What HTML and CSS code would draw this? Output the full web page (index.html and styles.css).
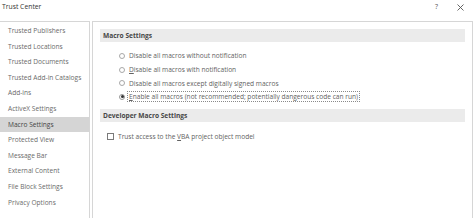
FILE: index.html
```html
<!DOCTYPE html>
<html>
<head>
<meta charset="utf-8">
<link rel="stylesheet" href="styles.css">
</head>
<body>
<div class="window">
  <div class="titlebar">
    <span class="title">Trust Center</span>
    <span class="help">?</span>
    <span class="close">
      <svg width="7" height="7" viewBox="0 0 7 7"><path d="M0.5 0.5 L6.5 6.5 M6.5 0.5 L0.5 6.5" stroke="#555" stroke-width="0.9" fill="none"/></svg>
    </span>
  </div>
  <div class="main">
    <nav class="nav">
      <div class="nav-item">Trusted Publishers</div>
      <div class="nav-item">Trusted Locations</div>
      <div class="nav-item">Trusted Documents</div>
      <div class="nav-item">Trusted Add-in Catalogs</div>
      <div class="nav-item">Add-ins</div>
      <div class="nav-item">ActiveX Settings</div>
      <div class="nav-item selected">Macro Settings</div>
      <div class="nav-item">Protected View</div>
      <div class="nav-item">Message Bar</div>
      <div class="nav-item">External Content</div>
      <div class="nav-item">File Block Settings</div>
      <div class="nav-item">Privacy Options</div>
    </nav>
    <section class="panel">
      <div class="section-head">Macro Settings</div>
      <div class="options">
        <div class="option"><span class="radio"></span><span class="label">Disable all macros without notification</span></div>
        <div class="option"><span class="radio"></span><span class="label"><u>D</u>isable all macros with notification</span></div>
        <div class="option"><span class="radio"></span><span class="label">Disable all macros except di<u>g</u>itally signed macros</span></div>
        <div class="option"><span class="radio checked"></span><span class="label focus"><u>E</u>nable all macros (not recommended; potentially dangerous code can run)</span></div>
      </div>
      <div class="section-head dev">Developer Macro Settings</div>
      <div class="check-row"><span class="checkbox"></span><span class="label">Trust access to the <u>V</u>BA project object model</span></div>
    </section>
  </div>
</div>
</body>
</html>
```
FILE: styles.css
```css
html, body {
  margin: 0;
  padding: 0;
  background: #ffffff;
}
body {
  width: 474px;
  height: 218px;
  overflow: hidden;
  font-family: "Open Sans", "Noto Sans", sans-serif;
  font-size: 6.6px;
  color: #626262;
}
.window {
  display: flex;
  flex-direction: column;
  height: 218px;
}
.titlebar {
  height: 21px;
  display: flex;
  align-items: flex-start;
  padding: 2px 0 0 2px;
  box-sizing: border-box;
}
.title {
  font-size: 6.8px;
  line-height: 10px;
  color: #333;
  flex: 1;
}
.help {
  font-size: 7px;
  line-height: 10px;
  color: #555;
  margin-right: 19px;
}
.close {
  display: flex;
  align-items: center;
  height: 10px;
  margin-right: 10px;
}
.main {
  flex: 1;
  display: flex;
  gap: 2px;
}
.nav {
  width: 90px;
  box-sizing: border-box;
  border-top: 1px solid #d6d6d6;
  border-right: 1px solid #d6d6d6;
  padding-top: 1px;
}
.nav-item {
  height: 15.6px;
  line-height: 15.6px;
  padding-left: 8px;
  color: #6a6a6a;
  white-space: nowrap;
}
.nav-item.selected {
  background: #d5d5d5;
  color: #444;
}
.panel {
  width: 381px;
  box-sizing: border-box;
  border: 1px solid #d6d6d6;
  border-bottom: none;
  padding: 7px 7px 0 7px;
}
.section-head {
  height: 13px;
  line-height: 13px;
  background: #ebebeb;
  font-weight: bold;
  color: #474747;
  padding-left: 3px;
}
.options {
  margin-top: 7px;
  padding-left: 19px;
}
.option {
  height: 13.7px;
  display: flex;
  align-items: center;
  gap: 4px;
}
.radio {
  width: 6px;
  height: 6px;
  border: 0.8px solid #a8a8a8;
  border-radius: 50%;
  box-sizing: border-box;
  display: flex;
  align-items: center;
  justify-content: center;
  flex: none;
}
.radio.checked {
  border-color: #999;
}
.radio.checked::after {
  content: "";
  width: 3px;
  height: 3px;
  border-radius: 50%;
  background: #333;
}
.label {
  white-space: nowrap;
  line-height: 9px;
}
.label.focus {
  outline: 1px dotted #8a8a8a;
  outline-offset: 0;
  padding: 0 1px;
  margin-left: -1px;
}
.section-head.dev {
  margin-top: 5px;
}
.check-row {
  margin-top: 8px;
  height: 13px;
  display: flex;
  align-items: center;
  gap: 4px;
  padding-left: 7px;
}
.checkbox {
  width: 7px;
  height: 7px;
  border: 1px solid #7a7a7a;
  box-sizing: border-box;
  flex: none;
}
u {
  text-decoration-thickness: 0.6px;
  text-underline-offset: 1px;
}
```
